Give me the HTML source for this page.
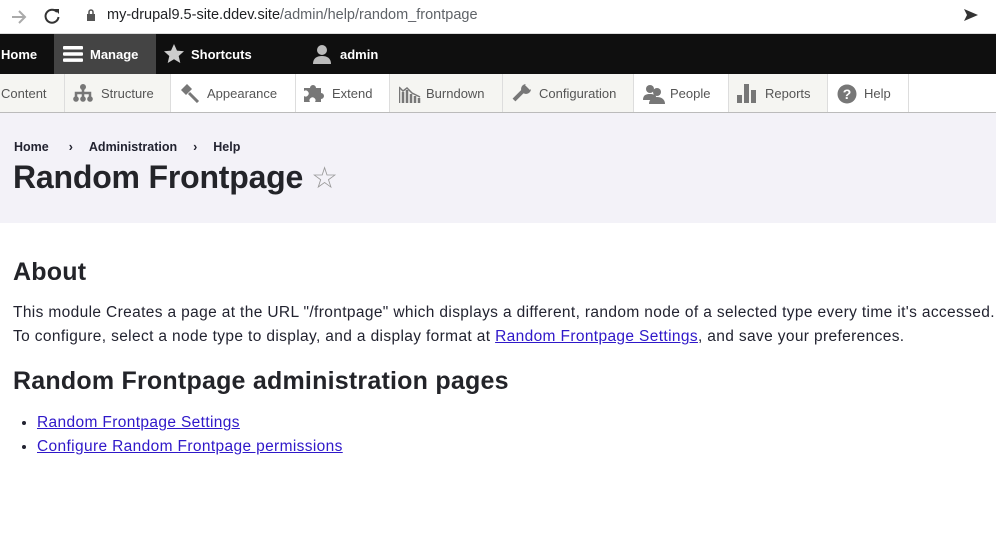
<!DOCTYPE html>
<html><head><meta charset="utf-8"><style>
*{margin:0;padding:0;box-sizing:border-box}
body{width:996px;height:534px;overflow:hidden;background:#fff;font-family:"Liberation Sans",sans-serif;color:#222330}
.chrome{height:34px;background:#fff;position:relative;border-bottom:1px solid #ddd}
.chrome .url{position:absolute;left:107px;top:7px;font-size:14.5px;color:#202124}
.chrome .url span{color:#5f6368}
.bar{height:40px;background:#0f0f0f;position:relative;color:#fff;font-weight:bold;font-size:13px}
.bar div{position:absolute;top:0;height:40px;line-height:41px}
.tray{height:39px;background:#fff;position:relative;border-bottom:1px solid #bbb;font-size:13px;color:#555}
.tray div{position:absolute;top:0;height:38px;line-height:40px;border-right:1px solid #ddd;padding-left:0}
.tray svg{position:absolute;top:10px}
.head{background:#f3f2f8;height:110px;position:relative}
.bc{position:absolute;left:14px;top:27px;font-size:12.5px;font-weight:bold;color:#222330}
h1{position:absolute;left:13px;top:46px;font-size:32px;font-weight:bold;color:#232429;letter-spacing:-0.2px}
.star{color:#999;font-weight:normal;font-size:30px;margin-left:8px}
h2{font-size:25px;font-weight:bold;color:#232429;position:absolute;left:13px;letter-spacing:0.22px}
p{position:absolute;left:13px;font-size:15.5px;line-height:24px;color:#222330;white-space:nowrap;letter-spacing:0.36px}
a{color:#2f18c9;text-decoration:underline}
ul{position:absolute;left:37px;top:411px;font-size:15.5px;line-height:24px;letter-spacing:0.36px}
</style></head><body>
<div class="chrome">
<svg style="position:absolute;left:10px;top:8px" width="18" height="18"><path d="M2 9h13M9 3l6 6-6 6" stroke="#aaa" stroke-width="2" fill="none"/></svg>
<svg style="position:absolute;left:43px;top:7px" width="18" height="18"><path d="M14 5A6.5 6.5 0 1 0 15.5 10" stroke="#333" stroke-width="2" fill="none"/><path d="M11 2h5v5z" fill="#333"/></svg>
<svg style="position:absolute;left:86px;top:9px" width="10" height="13"><rect x="1" y="5" width="8" height="7" fill="#555"/><path d="M3 5V3a2 2 0 0 1 4 0v2" stroke="#555" stroke-width="1.5" fill="none"/></svg>
<div class="url">my-drupal9.5-site.ddev.site<span>/admin/help/random_frontpage</span></div>
<svg style="position:absolute;left:963px;top:8px" width="16" height="14"><path d="M1 1l14 6-14 6 3-6z" fill="#333"/></svg>
</div>
<div class="bar">
<div style="left:1px">Home</div>
<div style="left:54px;width:102px;background:#444;padding-left:36px">Manage<svg style="position:absolute;left:9px;top:12px" width="20" height="16"><rect y="0" width="20" height="3.5" rx="1" fill="#fff"/><rect y="6.2" width="20" height="3.5" rx="1" fill="#fff"/><rect y="12.4" width="20" height="3.5" rx="1" fill="#fff"/></svg></div>
<div style="left:164px;padding-left:27px">Shortcuts<svg style="position:absolute;left:0;top:10px" width="20" height="19"><path d="M10 0l3 6.6 7 .7-5.3 4.7 1.6 7L10 15.3 3.7 19l1.6-7L0 7.3l7-.7z" fill="#ccc"/></svg></div>
<div style="left:313px;padding-left:27px">admin<svg style="position:absolute;left:0;top:10px" width="18" height="20"><circle cx="9" cy="6" r="5" fill="#bbb"/><path d="M0 20c0-6 4-8 9-8s9 2 9 8z" fill="#bbb"/></svg></div>
</div>
<div class="tray">
<div style="left:0;width:65px;background:#f5f5f2;padding-left:1px">Content</div>
<div style="left:65px;width:106px;background:#f5f5f2;padding-left:36px"><svg style="left:8px" width="20" height="18"><circle cx="10" cy="3" r="3" fill="#777"/><path d="M10 5v5M3 14V9h14v5M10 10v4" stroke="#777" stroke-width="2.5" fill="none"/><circle cx="3" cy="15" r="2.8" fill="#777"/><circle cx="10" cy="15" r="2.8" fill="#777"/><circle cx="17" cy="15" r="2.8" fill="#777"/></svg>Structure</div>
<div style="left:171px;width:125px;padding-left:36px"><svg style="left:9px" width="20" height="19"><path d="M1 6l6-6 5 5-6 6z" fill="#777"/><path d="M9 9l9 9" stroke="#777" stroke-width="3"/></svg>Appearance</div>
<div style="left:296px;width:94px;padding-left:36px"><svg style="left:8px" width="20" height="19"><path d="M0 4h6a3 3 0 1 1 6 0h5v5a3 3 0 1 1 0 6v3h-6a3 3 0 1 0-5 0H0v-6a3 3 0 1 0 0-5z" fill="#777"/></svg>Extend</div>
<div style="left:390px;width:113px;background:#f5f5f2;padding-left:36px"><svg style="left:9px" width="22" height="19"><path d="M0 4v15M4 8v11M8 6v13M12 10v9M16 12v7M20 14v5" stroke="#777" stroke-width="2.5"/><path d="M0 3l4 4 4-3 5 5 4 2 4 2" stroke="#777" stroke-width="1.5" fill="none"/></svg>Burndown</div>
<div style="left:503px;width:131px;background:#f5f5f2;padding-left:36px"><svg style="left:9px" width="20" height="19"><path d="M2 16L11 7" stroke="#777" stroke-width="4"/><circle cx="14" cy="5" r="5" fill="#777"/><path d="M14 0l5 5" stroke="#f5f5f2" stroke-width="3"/></svg>Configuration</div>
<div style="left:634px;width:95px;padding-left:36px"><svg style="left:9px" width="22" height="20"><circle cx="7" cy="5" r="4" fill="#777"/><path d="M0 16c0-5 3-6 7-6s6 1 6 3v3z" fill="#777"/><circle cx="14" cy="8" r="4" fill="#777"/><path d="M6 20c0-5 4-7 8-7s8 2 8 7z" fill="#777"/></svg>People</div>
<div style="left:729px;width:99px;background:#f5f5f2;padding-left:36px"><svg style="left:8px" width="20" height="19"><rect x="0" y="11" width="5" height="8" fill="#777"/><rect x="7" y="0" width="5" height="19" fill="#777"/><rect x="14" y="6" width="5" height="13" fill="#777"/></svg>Reports</div>
<div style="left:828px;width:81px;padding-left:36px"><svg style="left:9px" width="20" height="20"><circle cx="10" cy="10" r="9.5" fill="#777"/><text x="10" y="15" font-size="14" font-weight="bold" text-anchor="middle" fill="#fff" font-family="Liberation Sans">?</text></svg>Help</div>
</div>
<div class="head">
<div class="bc">Home<span style="margin:0 16px 0 20px">›</span>Administration<span style="margin:0 16px 0 16px">›</span>Help</div>
<h1>Random Frontpage<span class="star">☆</span></h1>
</div>
<h2 style="top:258px">About</h2>
<p style="top:301px">This module Creates a page at the URL "/frontpage" which displays a different, random node of a selected type every time it's accessed.<br>To configure, select a node type to display, and a display format at <a>Random Frontpage Settings</a>, and save your preferences.</p>
<h2 style="top:367px">Random Frontpage administration pages</h2>
<ul><li><a>Random Frontpage Settings</a></li><li><a>Configure Random Frontpage permissions</a></li></ul>
</body></html>
